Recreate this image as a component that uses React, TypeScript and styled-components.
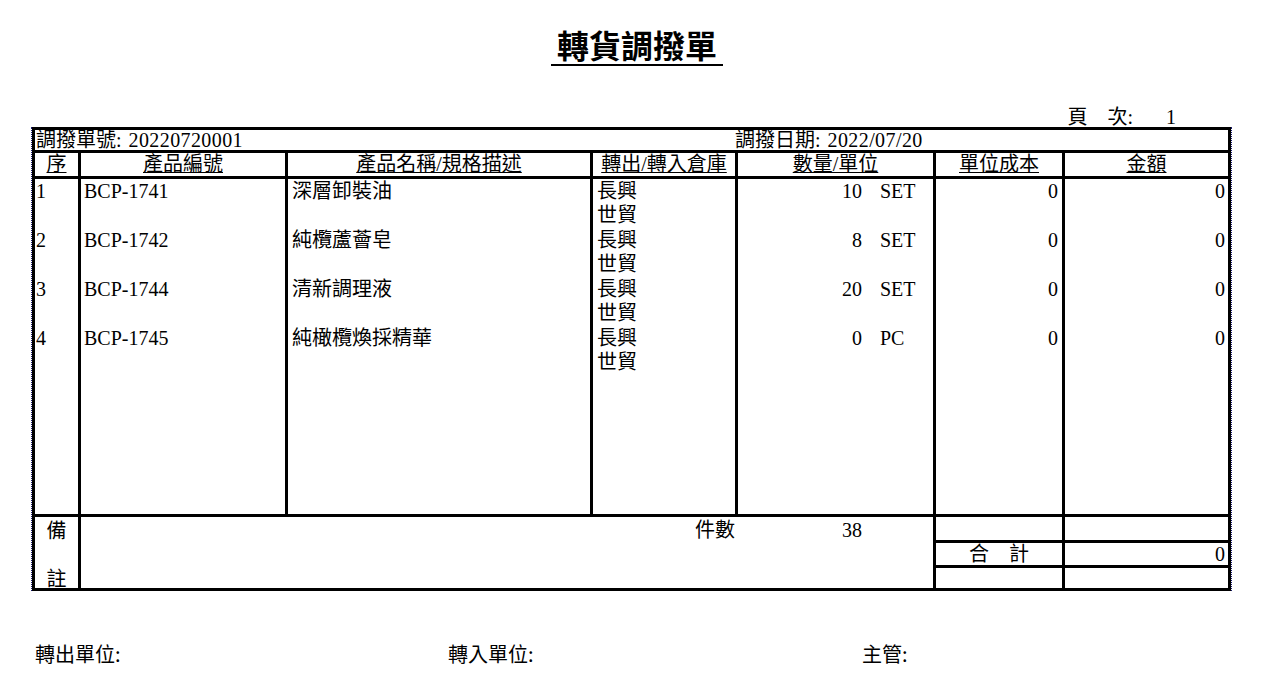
import React from "react";
import styled, { createGlobalStyle } from "styled-components";

const Global = createGlobalStyle`
  html, body { margin: 0; padding: 0; background: #fff; }
  body {
    font-family: "Liberation Serif", "Noto Sans CJK TC", serif;
    font-size: 20px;
    color: #000;
  }
  * { box-sizing: border-box; }
`;

const COLS = "46px 207px 305px 145px 198px 129px 163px";
const LINE = "3px solid #000";

const Page = styled.div`
  width: 1274px;
  height: 699px;
  padding-top: 24px;
  display: flex;
  flex-direction: column;
`;

const TitleRow = styled.div`
  display: flex;
  justify-content: center;
`;

const Title = styled.h1`
  margin: 0;
  padding: 0 6px;
  font-family: "Noto Sans CJK TC", sans-serif;
  font-size: 32px;
  font-weight: 700;
  line-height: 40px;
  border-bottom: 2px solid #000;
`;

const PageNoRow = styled.div`
  margin-top: 41px;
  display: flex;
  justify-content: flex-end;
  padding-right: 98px;
  line-height: 20px;
  height: 20px;
`;

const PageNoValue = styled.span`
  margin-left: 33px;
`;

const Frame = styled.div`
  margin-left: 31px;
  width: 1201px;
  border-left: 1px dotted #1c1c70;
  border-right: 1px dotted #1c1c70;
`;

const Table = styled.div`
  display: grid;
  grid-template-columns: ${COLS};
  border: ${LINE};
`;

const InfoRow = styled.div`
  grid-column: 1 / -1;
  height: 23px;
  border-bottom: ${LINE};
  display: grid;
  grid-template-columns: 699px 1fr;
  padding-left: 1px;
  line-height: 20px;
  white-space: nowrap;
`;

const InfoValue = styled.span`
  margin-left: 7px;
  letter-spacing: 0.4px;
`;

const HeadCell = styled.div<{ $last?: boolean }>`
  height: 26px;
  border-bottom: ${LINE};
  border-right: ${(p) => (p.$last ? "none" : LINE)};
  text-align: center;
  line-height: 23px;
  white-space: nowrap;
  text-decoration: underline;
  text-decoration-thickness: 1px;
  text-underline-offset: 1px;
`;

const DataCell = styled.div<{ $last?: boolean; $align?: "left" | "right"; $pad?: number }>`
  height: 49px;
  border-right: ${(p) => (p.$last ? "none" : LINE)};
  text-align: ${(p) => p.$align || "left"};
  padding-left: ${(p) => (p.$align === "right" ? 0 : p.$pad ?? 3)}px;
  padding-right: ${(p) => (p.$align === "right" ? p.$pad ?? 3 : 0)}px;
  line-height: 24px;
  white-space: nowrap;
`;

const QtyCell = styled(DataCell)`
  display: grid;
  grid-template-columns: 124px 1fr;
  column-gap: 18px;
  align-items: start;
  padding-left: 0;
`;

const QtyNum = styled.span`
  text-align: right;
`;

const FillCell = styled.div<{ $last?: boolean }>`
  height: 142px;
  border-bottom: ${LINE};
  border-right: ${(p) => (p.$last ? "none" : LINE)};
`;

const RemarkLabel = styled.div`
  grid-column: 1;
  grid-row: span 3;
  border-right: ${LINE};
  display: flex;
  flex-direction: column;
  justify-content: space-between;
  align-items: center;
  padding: 3px 0 0 0;
  line-height: 20px;
  font-family: "Noto Sans CJK TC", sans-serif;
`;

const RemarkBody = styled.div`
  grid-column: 2 / 6;
  grid-row: span 3;
  border-right: ${LINE};
  display: grid;
  grid-template-columns: 654px 127px;
  align-content: start;
  padding-top: 1px;
  line-height: 24px;
`;

const RightText = styled.span`
  text-align: right;
`;

const SumCell = styled.div<{ $h: number; $bottom?: boolean; $last?: boolean; $align?: "center" | "right" }>`
  height: ${(p) => p.$h}px;
  border-bottom: ${(p) => (p.$bottom ? LINE : "none")};
  border-right: ${(p) => (p.$last ? "none" : LINE)};
  text-align: ${(p) => p.$align || "left"};
  padding-right: ${(p) => (p.$align === "right" ? 3 : 0)}px;
  line-height: 22px;
  white-space: nowrap;
`;

const SignRow = styled.div`
  margin-top: 53px;
  padding-left: 35px;
  display: grid;
  grid-template-columns: 413px 414px 1fr;
  line-height: 20px;
  font-family: "Noto Sans CJK TC", sans-serif;
`;

type Item = { seq: string; code: string; name: string; qty: string; unit: string };

const items: Item[] = [
  { seq: "1", code: "BCP-1741", name: "深層卸裝油", qty: "10", unit: "SET" },
  { seq: "2", code: "BCP-1742", name: "純欖蘆薈皂", qty: "8", unit: "SET" },
  { seq: "3", code: "BCP-1744", name: "清新調理液", qty: "20", unit: "SET" },
  { seq: "4", code: "BCP-1745", name: "純橄欖煥採精華", qty: "0", unit: "PC" },
];

const headers = ["序", "產品編號", "產品名稱/規格描述", "轉出/轉入倉庫", "數量/單位", "單位成本", "金額"];

export default function App() {
  return (
    <>
      <Global />
      <Page>
        <TitleRow>
          <Title>轉貨調撥單</Title>
        </TitleRow>
        <PageNoRow>
          <span>頁　次:</span>
          <PageNoValue>1</PageNoValue>
        </PageNoRow>
        <Frame>
          <Table>
            <InfoRow>
              <span>
                調撥單號:<InfoValue>20220720001</InfoValue>
              </span>
              <span>
                調撥日期:<InfoValue>2022/07/20</InfoValue>
              </span>
            </InfoRow>
            {headers.map((h, i) => (
              <HeadCell key={h} $last={i === headers.length - 1}>
                {h}
              </HeadCell>
            ))}
            {items.map((it) => (
              <React.Fragment key={it.seq}>
                <DataCell $pad={1}>{it.seq}</DataCell>
                <DataCell>{it.code}</DataCell>
                <DataCell $pad={4}>{it.name}</DataCell>
                <DataCell $pad={4}>
                  長興
                  <br />
                  世貿
                </DataCell>
                <QtyCell>
                  <QtyNum>{it.qty}</QtyNum>
                  <span>{it.unit}</span>
                </QtyCell>
                <DataCell $align="right" $pad={4}>0</DataCell>
                <DataCell $align="right" $pad={3} $last>
                  0
                </DataCell>
              </React.Fragment>
            ))}
            {headers.map((h, i) => (
              <FillCell key={"f" + h} $last={i === headers.length - 1} />
            ))}
            <RemarkLabel>
              <span>備</span>
              <span>註</span>
            </RemarkLabel>
            <RemarkBody>
              <RightText>件數</RightText>
              <RightText>38</RightText>
            </RemarkBody>
            <SumCell $h={26} $bottom />
            <SumCell $h={26} $bottom $last />
            <SumCell $h={25} $bottom $align="center">合　計</SumCell>
            <SumCell $h={25} $bottom $last $align="right">0</SumCell>
            <SumCell $h={20} />
            <SumCell $h={20} $last />
          </Table>
        </Frame>
        <SignRow>
          <span>轉出單位:</span>
          <span>轉入單位:</span>
          <span>主管:</span>
        </SignRow>
      </Page>
    </>
  );
}
